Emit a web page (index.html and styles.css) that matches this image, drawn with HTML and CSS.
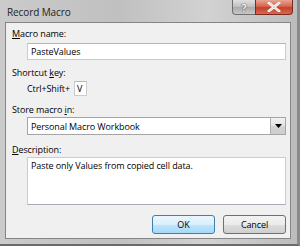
FILE: index.html
```html
<!DOCTYPE html>
<html>
<head>
<meta charset="utf-8">
<link rel="stylesheet" href="styles.css">
</head>
<body>
<div class="window">
  <div class="titlebar">
    <span class="title">Record Macro</span>
    <div class="caption-buttons">
      <div class="cap-btn help">?</div>
      <div class="cap-btn close">
        <svg width="14" height="10" viewBox="0 0 14 10"><path d="M2 1 L12 9 M12 1 L2 9" stroke="#ffffff" stroke-width="2.6" stroke-linecap="square" fill="none"/><path d="M2 1 L12 9 M12 1 L2 9" stroke="#5a1a10" stroke-opacity="0.35" stroke-width="0.6" fill="none"/></svg>
      </div>
    </div>
  </div>
  <div class="client">
    <div class="label"><u>M</u>acro name:</div>
    <div class="field name-field">PasteValues</div>
    <div class="label"><span>Shortcut <u>k</u>ey:</span></div>
    <div class="shortcut">
      <span>Ctrl+Shift+</span>
      <div class="keybox">V</div>
    </div>
    <div class="label">Store macro <u>i</u>n:</div>
    <div class="field select-field">
      <span>Personal Macro Workbook</span>
      <div class="drop-btn"><svg width="7" height="4" viewBox="0 0 7 4"><path d="M0 0 H7 L3.5 4 Z" fill="#000"/></svg></div>
    </div>
    <div class="label"><u>D</u>escription:</div>
    <div class="field desc-field">Paste only Values from copied cell data.</div>
    <div class="buttons">
      <div class="btn ok">OK</div>
      <div class="btn cancel">Cancel</div>
    </div>
  </div>
</div>
</body>
</html>
```
FILE: styles.css
```css
html, body {
  margin: 0;
  padding: 0;
  background: #ffffff;
}
body {
  font-family: "Open Sans", "Noto Sans", "DejaVu Sans", sans-serif;
  font-size: 9px;
  letter-spacing: -0.1px;
  color: #000;
}
.window {
  width: 300px;
  height: 246px;
  box-sizing: border-box;
  background: linear-gradient(90deg, #cbcbcb 0%, #c0c0c0 40%, #d2d2d2 70%, #bcbcbc 100%);
  display: flex;
  flex-direction: column;
  padding: 0 6px 5px 5px;
  border-bottom: 2px solid #6a6a6a;
  border-right: 3px solid #8a8a8a;
}
.titlebar {
  height: 22px;
  display: flex;
  align-items: flex-start;
  justify-content: space-between;
}
.title {
  padding: 5px 0 0 2px;
  font-size: 10px;
  color: #1e1e1e;
}
.caption-buttons {
  display: flex;
  margin-right: -2px;
}
.cap-btn {
  height: 15px;
  box-sizing: border-box;
  display: flex;
  align-items: center;
  justify-content: center;
}
.help {
  width: 23px;
  border: 1px solid #6e6e6e;
  border-top: none;
  border-right: none;
  border-radius: 0 0 0 4px;
  background: linear-gradient(#e0e0e0, #bdbdbd 50%, #a9a9a9 51%, #c8c8c8);
  color: #f4f4f4;
  font-weight: bold;
  font-size: 11px;
  text-shadow: 0 0 1px #444, 0 0 1px #444;
}
.close {
  width: 38px;
  border: 1px solid #7a2a1e;
  border-top: none;
  border-radius: 0 0 4px 0;
  background: linear-gradient(#e8a393, #d6654c 45%, #c4402a 55%, #d76a4e);
}
.client {
  flex: 1;
  background: #f0f0f0;
  border: 1px solid #858585;
  margin-top: 0;
  padding: 5px 4px 0 6px;
  display: flex;
  flex-direction: column;
}
.label {
  height: 12px;
  line-height: 12px;
}
.field {
  margin-left: 15px;
  background: #fff;
  border: 1px solid #c9ccd2;
  border-top-color: #b4b7bd;
  box-sizing: border-box;
  padding-left: 3px;
  display: flex;
  align-items: center;
}
.name-field {
  height: 17px;
  margin-top: 3px;
  margin-bottom: 7px;
}
.shortcut {
  margin-left: 15px;
  margin-top: 2px;
  margin-bottom: 8px;
  display: flex;
  align-items: center;
  gap: 4px;
}
.keybox {
  width: 13px;
  height: 15px;
  box-sizing: border-box;
  background: #fff;
  border: 1px solid #c9ccd2;
  border-top-color: #b4b7bd;
  padding-left: 2px;
  line-height: 13px;
}
.select-field {
  height: 18px;
  margin-top: 1px;
  margin-bottom: 9px;
  justify-content: space-between;
  border-color: #a5a5a5;
  padding-right: 0;
}
.drop-btn {
  width: 15px;
  height: 16px;
  box-sizing: border-box;
  border-left: 1px solid #b0b0b0;
  background: linear-gradient(#f2f2f2, #e2e2e2 50%, #d3d3d3 51%, #cdcdcd);
  display: flex;
  align-items: center;
  justify-content: center;
}
.desc-field {
  height: 48px;
  margin-top: 1px;
  align-items: flex-start;
  padding-top: 1px;
  border-color: #c9ccd2;
  border-bottom-color: #a9abb5;
}
.buttons {
  display: flex;
  justify-content: flex-end;
  gap: 8px;
  margin-top: 10px;
  padding-right: 0;
}
.btn {
  width: 63px;
  height: 19px;
  box-sizing: border-box;
  border-radius: 3px;
  display: flex;
  align-items: center;
  justify-content: center;
}
.ok {
  border: 1px solid #3c7fb1;
  background: linear-gradient(#eaf6fd, #d9f0fc 50%, #bee6fd 51%, #a7d9f5);
}
.cancel {
  border: 1px solid #707070;
  background: linear-gradient(#f2f2f2, #ebebeb 50%, #dddddd 51%, #cfcfcf);
}
```
